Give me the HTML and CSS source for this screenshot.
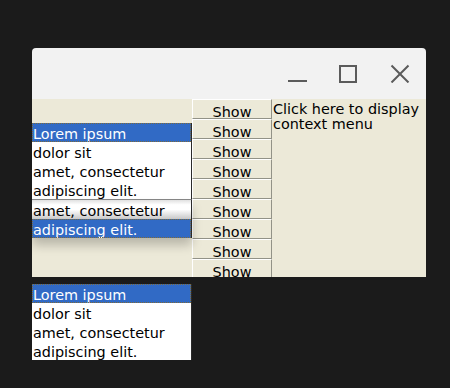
FILE: index.html
```html
<!DOCTYPE html>
<html>
<head>
<meta charset="utf-8">
<link rel="stylesheet" href="styles.css">
</head>
<body>
<div class="window">
  <div class="titlebar">
    <svg class="tb-icon tb-min" width="20" height="20" viewBox="0 0 20 20"><line x1="0" y1="18" x2="19" y2="18" stroke="#5b5b5b" stroke-width="2"/></svg>
    <svg class="tb-icon tb-max" width="20" height="20" viewBox="0 0 20 20"><rect x="2" y="3" width="16" height="16" fill="none" stroke="#5b5b5b" stroke-width="2"/></svg>
    <svg class="tb-icon tb-close" width="20" height="20" viewBox="0 0 20 20"><path d="M1.5 2.5 L18.5 19.5 M18.5 2.5 L1.5 19.5" fill="none" stroke="#5b5b5b" stroke-width="2"/></svg>
  </div>
  <div class="content">
    <div class="leftcol">
      <div class="list list-a">
        <div class="item sel">Lorem ipsum</div>
        <div class="item">dolor sit</div>
        <div class="item">amet, consectetur</div>
        <div class="item">adipiscing elit.</div>
      </div>
      <div class="list list-b">
        <div class="item fade">amet, consectetur</div>
        <div class="item sel">adipiscing elit.</div>
      </div>
    </div>
    <div class="btncol">
      <div class="btn">Show</div>
      <div class="btn">Show</div>
      <div class="btn">Show</div>
      <div class="btn">Show</div>
      <div class="btn">Show</div>
      <div class="btn">Show</div>
      <div class="btn">Show</div>
      <div class="btn">Show</div>
      <div class="btn">Show</div>
    </div>
    <div class="label">Click here to display context menu</div>
  </div>
</div>
<div class="list list-c">
  <div class="item sel">Lorem ipsum</div>
  <div class="item">dolor sit</div>
  <div class="item">amet, consectetur</div>
  <div class="item">adipiscing elit.</div>
</div>
</body>
</html>
```
FILE: styles.css
```css
html, body {
  margin: 0;
  padding: 0;
  background: #1b1b1b;
  font-family: "DejaVu Sans", sans-serif;
  font-size: 14.4px;
  color: #000;
}
body {
  padding-top: 48px;
  padding-left: 32px;
}
.window {
  width: 394px;
  border-radius: 4px 4px 0 0;
  overflow: hidden;
}
.titlebar {
  height: 51px;
  background: #f2f2f2;
  display: flex;
  justify-content: flex-end;
  align-items: flex-start;
  padding: 15px 16px 0 0;
  box-sizing: border-box;
}
.tb-icon { display: block; }
.tb-max { margin-left: 30px; }
.tb-close { margin-left: 32px; }
.content {
  height: 178px;
  background: #ece9d8;
  display: flex;
  overflow: hidden;
}
.leftcol {
  width: 160px;
  padding-top: 24px;
  flex: none;
}
.list {
  width: 160px;
  background: #fff;
  box-sizing: border-box;
  border-right: 1px solid #2a2a2a;
}
.list-a { border-bottom: 1px solid #888; }
.list-b {
  box-shadow: 0 7px 10px rgba(0, 0, 0, 0.22);
  position: relative;
}
.item {
  height: 19px;
  box-sizing: border-box;
  padding: 3px 0 0 1px;
  line-height: 16px;
  white-space: nowrap;
}
.item.sel {
  background: #316ac5;
  color: #fff;
  outline: 1px dotted #7d6a3a;
  outline-offset: -1px;
}
.item.fade {
  background: linear-gradient(#e0e0e0 0, #ffffff 25%, #ffffff 50%, #c8c8c8 100%);
}
.btncol {
  width: 80px;
  flex: none;
  display: flex;
  flex-direction: column;
}
.btn {
  height: 20px;
  flex: none;
  box-sizing: border-box;
  border-top: 1px solid #ffffff;
  border-left: 1px solid #ffffff;
  border-right: 1px solid #929287;
  border-bottom: 1px solid #929287;
  text-align: center;
  padding-top: 4px;
  line-height: 16px;
}
.label {
  padding: 3px 0 0 1px;
  line-height: 14.5px;
  width: 152px;
}
.list-c {
  margin-top: 7px;
  border-right: 1px solid #2a2a2a;
}
```
